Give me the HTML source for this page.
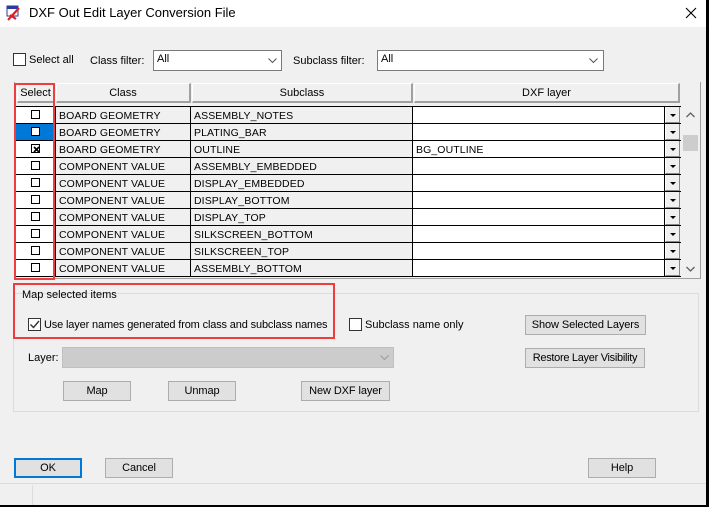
<!DOCTYPE html>
<html><head><meta charset="utf-8"><style>
*{box-sizing:border-box;margin:0;padding:0}
body{width:709px;height:507px;background:#f0f0f0;font-family:"Liberation Sans",sans-serif;font-size:11px;color:#000;position:relative;overflow:hidden;white-space:nowrap}
.a{position:absolute}
.btn{position:absolute;background:#e1e1e1;border:1px solid #adadad;text-align:center;font-size:11px;line-height:18px;letter-spacing:-0.1px}
.cb{position:absolute;width:13px;height:13px;border:1px solid #333;background:#fff}
.sel{position:absolute;background:#fff;border:1px solid #7a7a7a;padding-left:3px;line-height:17px}
.row{position:absolute;left:16px;height:17px;width:665px;border-bottom:1px solid #000}
.row div{position:absolute;top:0;height:16px;line-height:18px;font-size:10.5px;padding-left:3px;border-right:1px solid #000;letter-spacing:0.1px}
.hd{position:absolute;top:83px;height:20px;background:#f0f0f0;border-right:2px solid #a0a0a0;border-bottom:2px solid #a0a0a0;border-left:1px solid #fff;border-top:1px solid #fff;text-align:center;line-height:18px;font-size:11px}
.sq{position:absolute;left:15px;top:3px;width:9px;height:9px;border:1px solid #000;background:#fff}
.dd{position:absolute;left:649px;top:0;width:15px;height:16px;background:#f0f0f0;border-right:1px solid #888;border-bottom:1px solid #888;border-left:1px solid #fff}
.dd:after{content:"";position:absolute;left:4px;top:7px;border-left:3px solid transparent;border-right:3px solid transparent;border-top:3px solid #000}
</style></head><body>
<div class="a" style="left:0;top:0;width:709px;height:27px;background:#fff"></div>
<svg class="a" style="left:6px;top:5px" width="16" height="16" viewBox="0 0 16 16"><rect x="1" y="1" width="11" height="10" fill="#fff" stroke="#2a3aa0"/><rect x="1" y="1" width="11" height="3" fill="#2a3aa0"/><path d="M2 15 L13 3 M4 10 L10 14" stroke="#e02020" stroke-width="2.2" fill="none"/></svg>
<div class="a" style="left:29px;top:5px;font-size:13px">DXF Out Edit Layer Conversion File</div>
<svg class="a" style="left:685px;top:7px" width="12" height="12"><path d="M1 1L11 11M11 1L1 11" stroke="#000" stroke-width="1.1"/></svg>
<div class="a" style="left:706px;top:0;width:3px;height:507px;background:#000"></div>
<div class="a" style="left:0;top:505px;width:709px;height:2px;background:#000"></div>

<div class="cb" style="left:13px;top:53px"></div>
<div class="a" style="left:29px;top:54px">Select all</div>
<div class="a" style="left:90px;top:55px">Class filter:</div>
<div class="sel" style="left:153px;top:50px;width:129px;height:21px">All</div>
<svg class="a" style="left:268px;top:58px" width="9" height="6"><path d="M0.5 0.5L4.5 4.5L8.5 0.5" stroke="#555" fill="none"/></svg>
<div class="a" style="left:293px;top:55px">Subclass filter:</div>
<div class="sel" style="left:377px;top:50px;width:227px;height:21px">All</div>
<svg class="a" style="left:589px;top:58px" width="9" height="6"><path d="M0.5 0.5L4.5 4.5L8.5 0.5" stroke="#555" fill="none"/></svg>

<div class="a" style="left:14px;top:82px;width:687px;height:197px;border:1px solid #a0a0a0;border-top:none;background:#f0f0f0"></div>
<div class="a" style="left:15px;top:106px;width:666px;height:172px;border-top:1px solid #000;border-left:1px solid #000"></div>
<div class="hd" style="left:17px;width:38px">Select</div>
<div class="hd" style="left:56px;width:135px">Class</div>
<div class="hd" style="left:192px;width:221px">Subclass</div>
<div class="hd" style="left:414px;width:266px">DXF layer</div>

<div id="rows"></div>
<div class="a" style="left:682px;top:107px;width:17px;height:170px;background:#f0f0f0"></div>
<div class="a" style="left:683px;top:135px;width:15px;height:16px;background:#cdcdcd"></div>
<svg class="a" style="left:686px;top:112px" width="9" height="6"><path d="M0.5 5L4.5 1L8.5 5" stroke="#606060" stroke-width="1.3" fill="none"/></svg>
<svg class="a" style="left:686px;top:266px" width="9" height="6"><path d="M0.5 1L4.5 5L8.5 1" stroke="#606060" stroke-width="1.3" fill="none"/></svg>

<div class="a" style="left:14px;top:83px;width:41px;height:197px;border:2px solid #f03c3c"></div>

<div class="a" style="left:13px;top:293px;width:686px;height:119px;border:1px solid #dcdcdc"></div>
<div class="a" style="left:13px;top:283px;width:322px;height:56px;border:2px solid #f03c3c"></div>
<div class="a" style="left:22px;top:289px">Map selected items</div>
<div class="cb" style="left:28px;top:318px;border-color:#333"></div>
<svg class="a" style="left:29px;top:319px" width="11" height="11"><path d="M1.5 5.5L4.5 8.5L10 2" stroke="#333" stroke-width="1.4" fill="none"/></svg>
<div class="a" style="left:44px;top:319px;letter-spacing:-0.15px">Use layer names generated from class and subclass names</div>
<div class="cb" style="left:349px;top:318px"></div>
<div class="a" style="left:365px;top:319px">Subclass name only</div>
<div class="btn" style="left:525px;top:315px;width:121px;height:20px">Show Selected Layers</div>
<div class="btn" style="left:525px;top:348px;width:120px;height:20px;letter-spacing:-0.3px">Restore Layer Visibility</div>
<div class="a" style="left:28px;top:352px">Layer:</div>
<div class="a" style="left:62px;top:347px;width:332px;height:21px;background:#cccccc;border:1px solid #c0c0c0"></div>
<svg class="a" style="left:380px;top:355px" width="9" height="6"><path d="M0.5 0.5L4.5 4.5L8.5 0.5" stroke="#999" fill="none"/></svg>
<div class="btn" style="left:63px;top:381px;width:68px;height:20px">Map</div>
<div class="btn" style="left:168px;top:381px;width:68px;height:20px">Unmap</div>
<div class="btn" style="left:301px;top:381px;width:89px;height:20px">New DXF layer</div>

<div class="btn" style="left:14px;top:458px;width:68px;height:20px;border:2px solid #0078d7;line-height:16px">OK</div>
<div class="btn" style="left:105px;top:458px;width:68px;height:20px">Cancel</div>
<div class="btn" style="left:588px;top:458px;width:68px;height:20px">Help</div>
<div class="a" style="left:0;top:483px;width:706px;height:1px;background:#dcdcdc"></div>
<div class="a" style="left:32px;top:485px;width:1px;height:20px;background:#dcdcdc"></div>
<script>
var d=[["BOARD GEOMETRY","ASSEMBLY_NOTES",""],["BOARD GEOMETRY","PLATING_BAR",""],["BOARD GEOMETRY","OUTLINE","BG_OUTLINE"],["COMPONENT VALUE","ASSEMBLY_EMBEDDED",""],["COMPONENT VALUE","DISPLAY_EMBEDDED",""],["COMPONENT VALUE","DISPLAY_BOTTOM",""],["COMPONENT VALUE","DISPLAY_TOP",""],["COMPONENT VALUE","SILKSCREEN_BOTTOM",""],["COMPONENT VALUE","SILKSCREEN_TOP",""],["COMPONENT VALUE","ASSEMBLY_BOTTOM",""]];
var h="";d.forEach(function(r,i){var sb=i==1?"#0078d7":"#fff";var chk=i==2?'<svg style="position:absolute;left:1px;top:1px" width="7" height="7"><path d="M1 1L6 6M6 1L1 6" stroke="#000" stroke-width="1.6"/></svg>':'';
h+='<div class="row" style="top:'+(107+i*17)+'px"><div style="left:0;width:40px;background:'+sb+'"><span class="sq">'+chk+'</span></div><div style="left:40px;width:135px;background:#f0f0f0">'+r[0]+'</div><div style="left:175px;width:222px;background:#f0f0f0">'+r[1]+'</div><div style="left:397px;width:252px;background:#fff">'+r[2]+'</div><span class="dd"></span></div>';});
document.getElementById("rows").innerHTML=h;
</script>
</body></html>
